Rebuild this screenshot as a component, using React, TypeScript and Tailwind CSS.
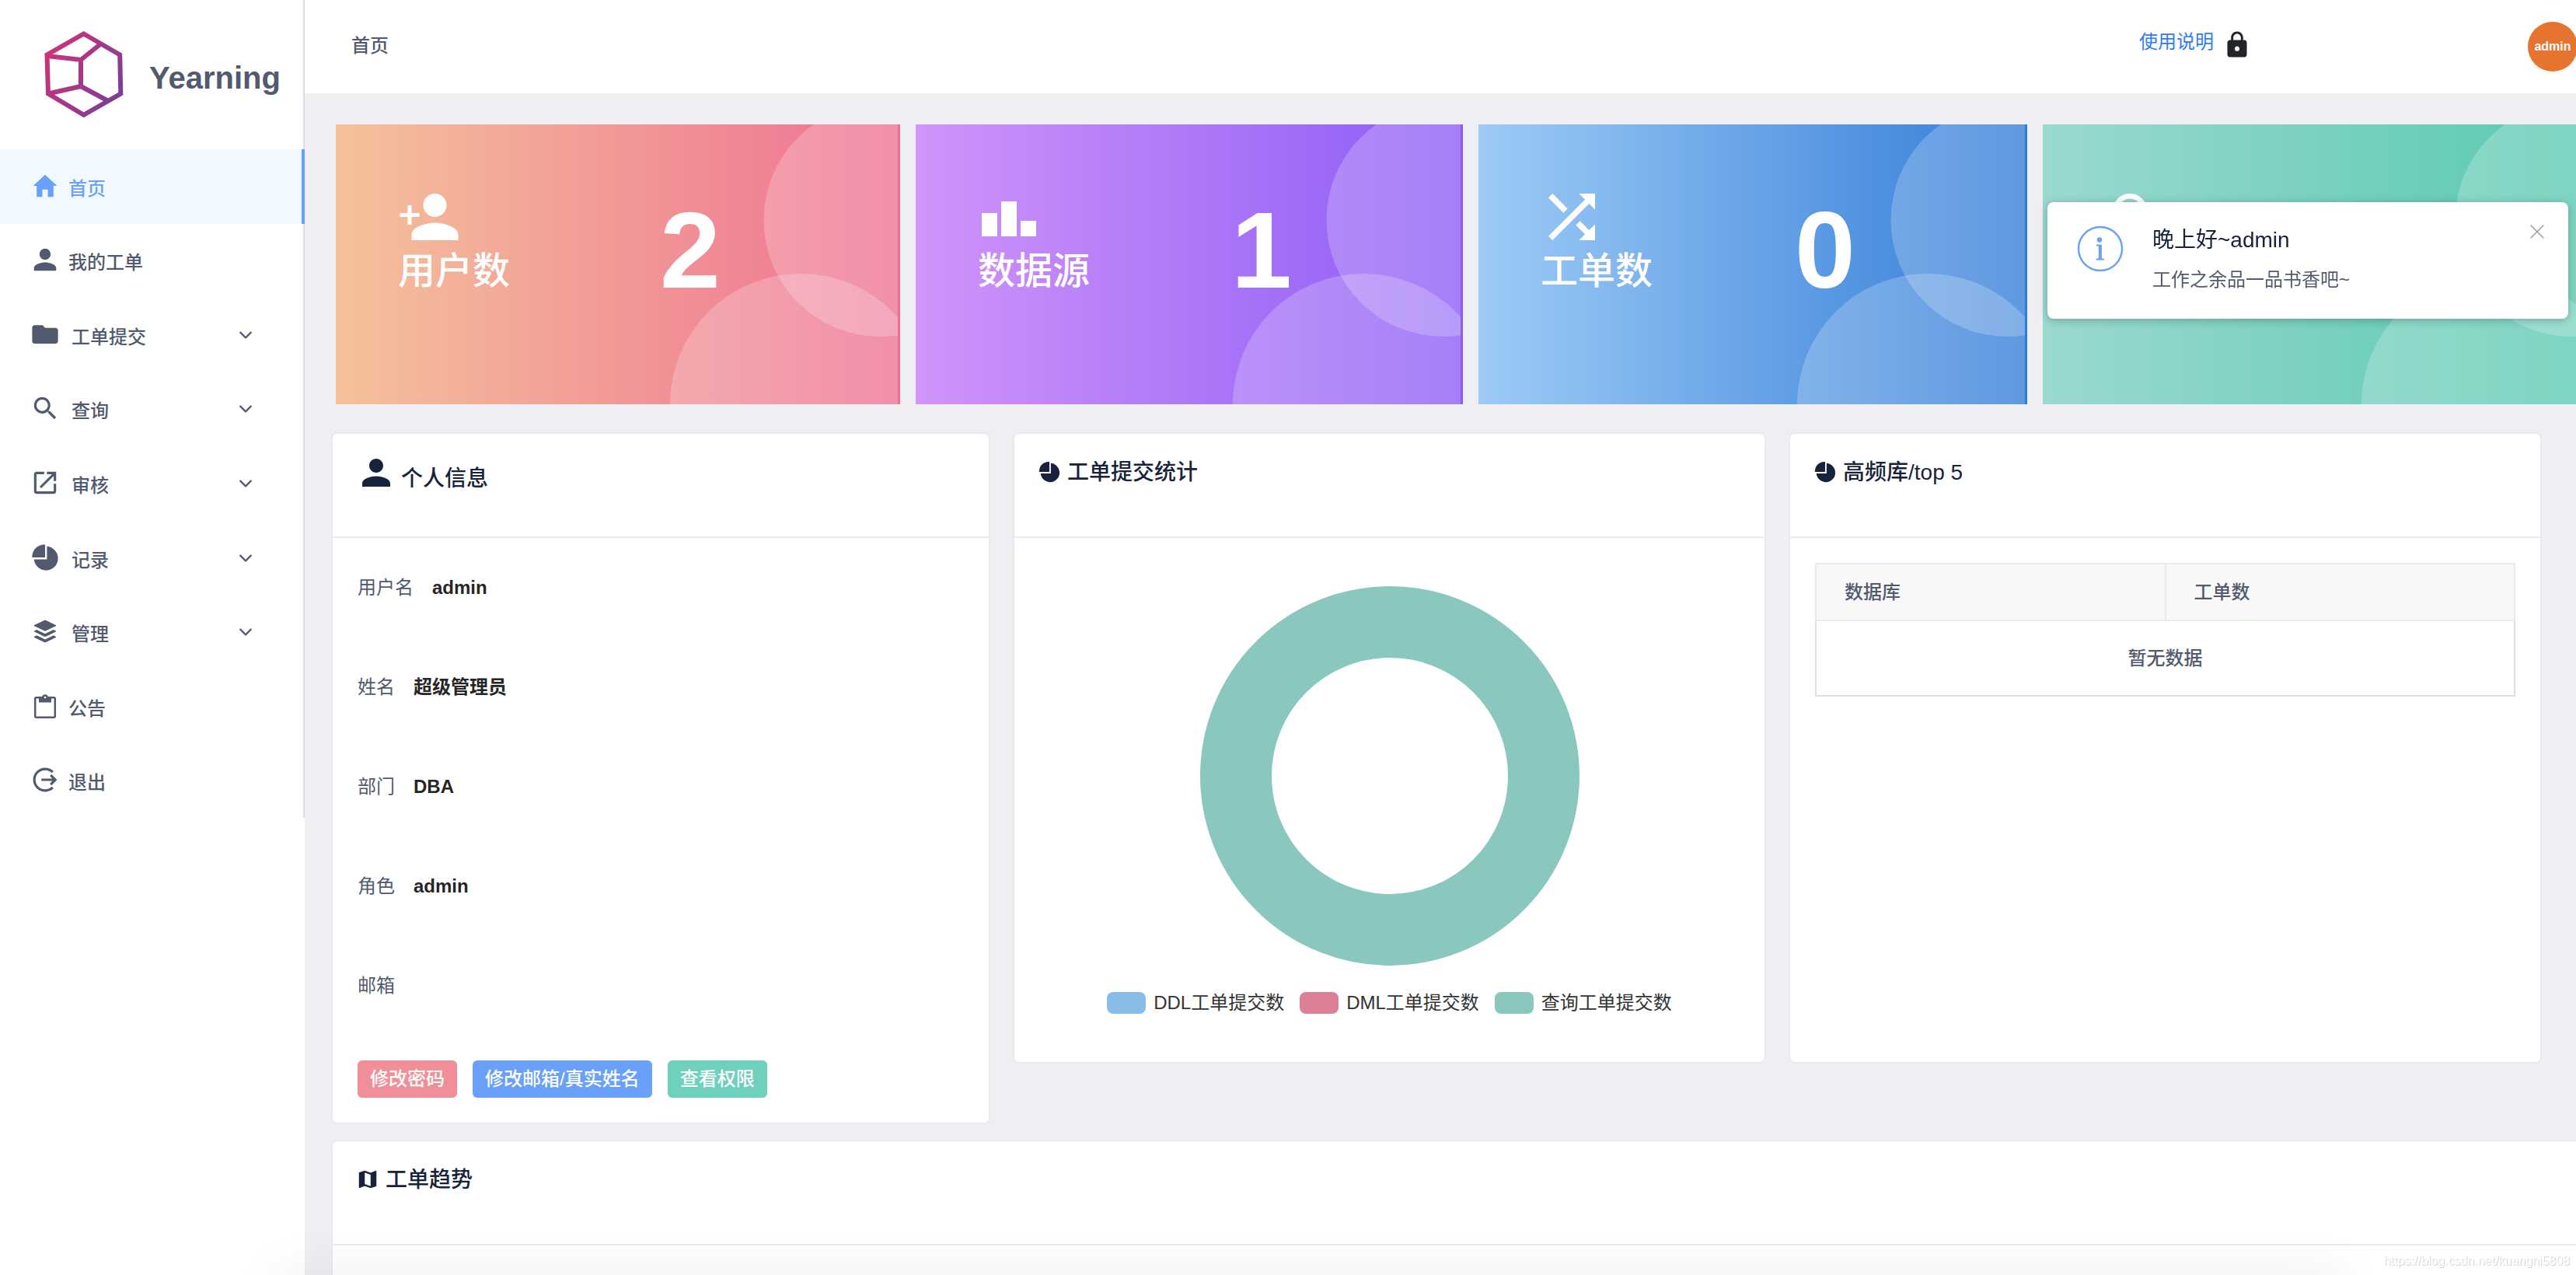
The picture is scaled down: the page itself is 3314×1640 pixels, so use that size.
import React, { useState } from "react";
import type { IconType } from "react-icons";
import {
  IoIosArrowDown,
  IoLogoBuffer,
  IoMdFolder,
  IoMdHome,
  IoMdLock,
  IoMdLogOut,
  IoMdMap,
  IoMdOpen,
  IoMdPerson,
  IoMdPersonAdd,
  IoMdPie,
  IoMdPodium,
  IoMdSearch,
  IoMdShuffle,
} from "react-icons/io";
import { X } from "lucide-react";
import clsx from "clsx";

interface MenuEntry {
  label: string;
  icon: IconType;
  sub?: boolean;
}

const ClipboardIcon: IconType = () => (
  <svg viewBox="-5 -4 38 38" className="size-[38px]" fill="none" stroke="currentColor" strokeWidth="2.5">
    <rect x="1.2" y="4.2" width="25.6" height="25.6" rx="1.5" />
    <path d="M6 3H10.2A4 4 0 0 1 17.8 3H22V10.6H6Z" fill="currentColor" stroke="none" />
    <circle cx="14" cy="4" r="1.3" fill="#fff" stroke="none" />
  </svg>
);

const menu: MenuEntry[] = [
  { label: "首页", icon: IoMdHome },
  { label: "我的工单", icon: IoMdPerson },
  { label: "工单提交", icon: IoMdFolder, sub: true },
  { label: "查询", icon: IoMdSearch, sub: true },
  { label: "审核", icon: IoMdOpen, sub: true },
  { label: "记录", icon: IoMdPie, sub: true },
  { label: "管理", icon: IoLogoBuffer, sub: true },
  { label: "公告", icon: ClipboardIcon },
  { label: "退出", icon: IoMdLogOut },
];

interface Stat {
  icon: IconType;
  label?: string;
  value?: number;
  bg: string;
}

const stats: Stat[] = [
  { icon: IoMdPersonAdd, label: "用户数", value: 2, bg: "from-[#f5c29b] to-[#ee7092]" },
  { icon: IoMdPodium, label: "数据源", value: 1, bg: "from-[#d194fa] to-[#8b5cf6]" },
  { icon: IoMdShuffle, label: "工单数", value: 0, bg: "from-[#9ecbf6] to-[#327cd8]" },
  { icon: IoMdSearch, bg: "from-[#9bd9d1] to-[#58c9b1]" },
];

const profile = [
  { label: "用户名", value: "admin" },
  { label: "姓名", value: "超级管理员" },
  { label: "部门", value: "DBA" },
  { label: "角色", value: "admin" },
  { label: "邮箱", value: "" },
];

const legend = [
  { label: "DDL工单提交数", color: "bg-[#8abce8]" },
  { label: "DML工单提交数", color: "bg-[#dd7f96]" },
  { label: "查询工单提交数", color: "bg-[#8ac8bf]" },
];

function Logo() {
  return (
    <svg viewBox="54 38 108 116" className="h-[116px] w-[108px] shrink-0" fill="none" stroke="url(#logo)" strokeWidth="6">
      <defs>
        <linearGradient id="logo" gradientUnits="userSpaceOnUse" x1="62" y1="65" x2="158" y2="120">
          <stop offset="0" stopColor="#cd3379" />
          <stop offset="1" stopColor="#7b3e98" />
        </linearGradient>
      </defs>
      <path d="M107.7 43.5 154.2 70.5 155.3 120.5 107.7 147.8 62 120.5 60.5 70.5Z" />
      <path d="M61 72 104 77 129.5 56.5M104 77V111L62 120.5M104 111 138.5 129.5" />
    </svg>
  );
}

function Sidebar() {
  const [active, setActive] = useState("首页");

  return (
    <aside className="w-[392px] shrink-0 bg-white">
      <div className="border-r-2 border-[#dcdee2]">
        <div className="flex h-48 items-center gap-[30px] pl-[54px]">
          <Logo />
          <span className="mt-2 text-[40px] leading-12 font-bold">Yearning</span>
        </div>
        <nav className="-mr-0.5 flex min-h-[860px] flex-col">
          {menu.map(({ label, icon: Icon, sub }) => (
            <a
              key={label}
              href="#"
              onClick={() => setActive(label)}
              className={clsx(
                "flex flex-1 items-center pl-[39px] font-medium",
                sub ? "gap-[15px]" : "gap-[11px]",
                active === label && "border-r-4 border-[#68a0fa] bg-[#f1f9ff] text-[#68a0fa]"
              )}
            >
              <span className="mb-0.5">
                <Icon size={38} />
              </span>
              <span className="mt-1.5">{label}</span>
              {sub && <IoIosArrowDown size={24} className="mr-16 ml-auto" />}
            </a>
          ))}
        </nav>
      </div>
    </aside>
  );
}

function StatCard({ icon: Icon, label, value, bg }: Stat) {
  return (
    <div className={clsx("relative h-[360px] overflow-hidden bg-linear-to-r/srgb text-white", bg)}>
      <svg viewBox="0 0 296 360" className="absolute top-0 right-[3px] h-full" fill="#fff" fillOpacity="0.22">
        <circle cx="273.5" cy="123" r="150" />
        <circle cx="171" cy="360" r="168" />
      </svg>
      <div className="relative grid grid-cols-2">
        <div className="pt-[79px] pl-20">
          <Icon size={80} />
          <p className="text-5xl leading-15 font-medium">{label}</p>
        </div>
        <p className="pt-[82px] pl-[54px] text-[140px] leading-40 font-bold">{value}</p>
      </div>
    </div>
  );
}

interface PanelProps {
  icon: IconType;
  title: string;
  large?: boolean;
  className?: string;
  children?: React.ReactNode;
}

function Panel({ icon: Icon, title, large, className, children }: PanelProps) {
  return (
    <section className={clsx("rounded-lg border-2 border-[#e8eaec] bg-white", className)}>
      <h2
        className={clsx(
          "flex h-[134px] items-start gap-2 border-b-2 border-[#e8eaec] px-8 text-[28px] leading-10 font-medium text-[#17233d]",
          large ? "pt-[38px]" : "pt-[30px]"
        )}
      >
        {large ? <Icon size={48} className="-mt-3" /> : <Icon size={30} className="mt-1 -ml-0.5" />}
        {title}
      </h2>
      {children}
    </section>
  );
}

function Notice() {
  const [open, setOpen] = useState(true);
  if (!open) return null;

  return (
    <div
      role="alert"
      className="fixed top-[260px] right-2.5 flex min-h-[150px] w-[670px] items-start rounded-lg bg-white pt-6 pr-6 pl-8 shadow-[0_2px_12px_rgba(0,0,0,0.25)]"
    >
      <svg viewBox="0 0 72 72" className="size-[72px] text-[#68a0fa]" fill="none" stroke="currentColor" strokeWidth="2.4">
        <circle cx="36" cy="36" r="28" />
        <circle cx="35" cy="24.5" r="3.2" fill="currentColor" stroke="none" />
        <path d="M31 31.5H36.5V49" strokeWidth="2" />
        <path d="M35.8 31V49" strokeWidth="4" />
        <path d="M30.5 49.5H41" strokeWidth="2" />
      </svg>
      <div className="pl-[31px]">
        <p className="text-[28px] leading-[50px] text-[#17233d]">晚上好~admin</p>
        <p className="leading-13">工作之余品一品书香吧~</p>
      </div>
      <button aria-label="关闭" onClick={() => setOpen(false)} className="-mt-0.5 ml-auto text-[#999]">
        <X size={32} strokeWidth={1} />
      </button>
    </div>
  );
}

export default function App() {
  return (
    <div className="flex h-screen overflow-hidden bg-[#efeef3] font-['Liberation_Sans','Noto_Sans_CJK_SC',sans-serif] text-2xl text-[#515a6e]">
      <Sidebar />

      <div className="min-w-0 flex-1">
        <header className="flex h-[120px] items-center bg-white pl-[60px]">
          <span className="pb-0.5 font-medium">首页</span>
          <a href="#" className="ml-auto pb-3 text-[#2d7cf6]">使用说明</a>
          <button aria-label="锁定" className="mr-[354px] mb-1.5 ml-2.5 text-[#212529]">
            <IoMdLock size={40} />
          </button>
          <button className="-mr-0.5 size-16 rounded-full bg-[#e6742f] text-base font-bold text-white">admin</button>
        </header>

        <main className="pt-10 pl-[34px]">
          {/* 统计卡片 */}
          <div className="-mr-5 ml-1.5 grid grid-cols-[726fr_704fr_706fr_706fr] gap-5">
            {stats.map((s, i) => (
              <StatCard key={i} {...s} />
            ))}
          </div>

          <div className="mt-9 mr-11 grid grid-cols-[848fr_969fr_969fr] items-start gap-[29px]">
            <Panel icon={IoMdPerson} title="个人信息" large>
              <dl className="px-8">
                {profile.map((row) => (
                  <div key={row.label} className="flex h-32 items-center gap-6">
                    <dt>{row.label}</dt>
                    <dd className="font-bold text-[#262626]">{row.value}</dd>
                  </div>
                ))}
              </dl>
              <div className="flex gap-5 px-8 pt-8 pb-8 font-medium text-white">
                <button className="h-12 rounded-md bg-[#f08f99] px-4">修改密码</button>
                <button className="h-12 rounded-md bg-[#68a0fa] px-4">修改邮箱/真实姓名</button>
                <button className="h-12 rounded-md bg-[#6ed0bd] px-4">查看权限</button>
              </div>
            </Panel>

            <Panel icon={IoMdPie} title="工单提交统计">
              <div className="flex flex-col items-center pt-[62px] pb-[58px]">
                <svg viewBox="0 0 488 488" className="size-[488px]">
                  <circle cx="244" cy="244" r="198" fill="none" stroke="#8ac8bf" strokeWidth="92" />
                </svg>
                <ul className="mt-[30px] flex gap-5 leading-9 text-[#333]">
                  {legend.map((l) => (
                    <li key={l.label} className="flex items-center gap-2.5">
                      <span className={clsx("h-7 w-[50px] rounded-lg", l.color)} />
                      {l.label}
                    </li>
                  ))}
                </ul>
              </div>
            </Panel>

            <Panel icon={IoMdPie} title="高频库/top 5">
              <div className="px-8 pt-8 pb-[470px]">
                <table className="w-full table-fixed border-collapse border-2 border-[#dcdee2]">
                  <thead>
                    <tr className="h-[73px] bg-[#f8f8f9] text-left">
                      <th className="border-2 border-[#e8eaec] px-9 font-medium">数据库</th>
                      <th className="border-2 border-[#e8eaec] px-9 font-medium">工单数</th>
                    </tr>
                  </thead>
                  <tbody>
                    <tr className="h-[97px]">
                      <td colSpan={2} className="text-center font-medium">暂无数据</td>
                    </tr>
                  </tbody>
                </table>
              </div>
            </Panel>
          </div>

          <Panel icon={IoMdMap} title="工单趋势" className="mt-5 -mr-5 h-[400px]" />
        </main>
      </div>

      <Notice />

      {/* 底部阴影 */}
      <div className="pointer-events-none fixed top-full right-[300px] left-[360px] h-20 shadow-[0_0_70px_rgba(0,0,0,0.07)]" />
      <span className="fixed right-2 bottom-1.5 text-base leading-6 text-white [text-shadow:1px_1px_1px_rgba(0,0,0,0.2)]">
        https://blog.csdn.net/kuangni5808
      </span>
    </div>
  );
}
